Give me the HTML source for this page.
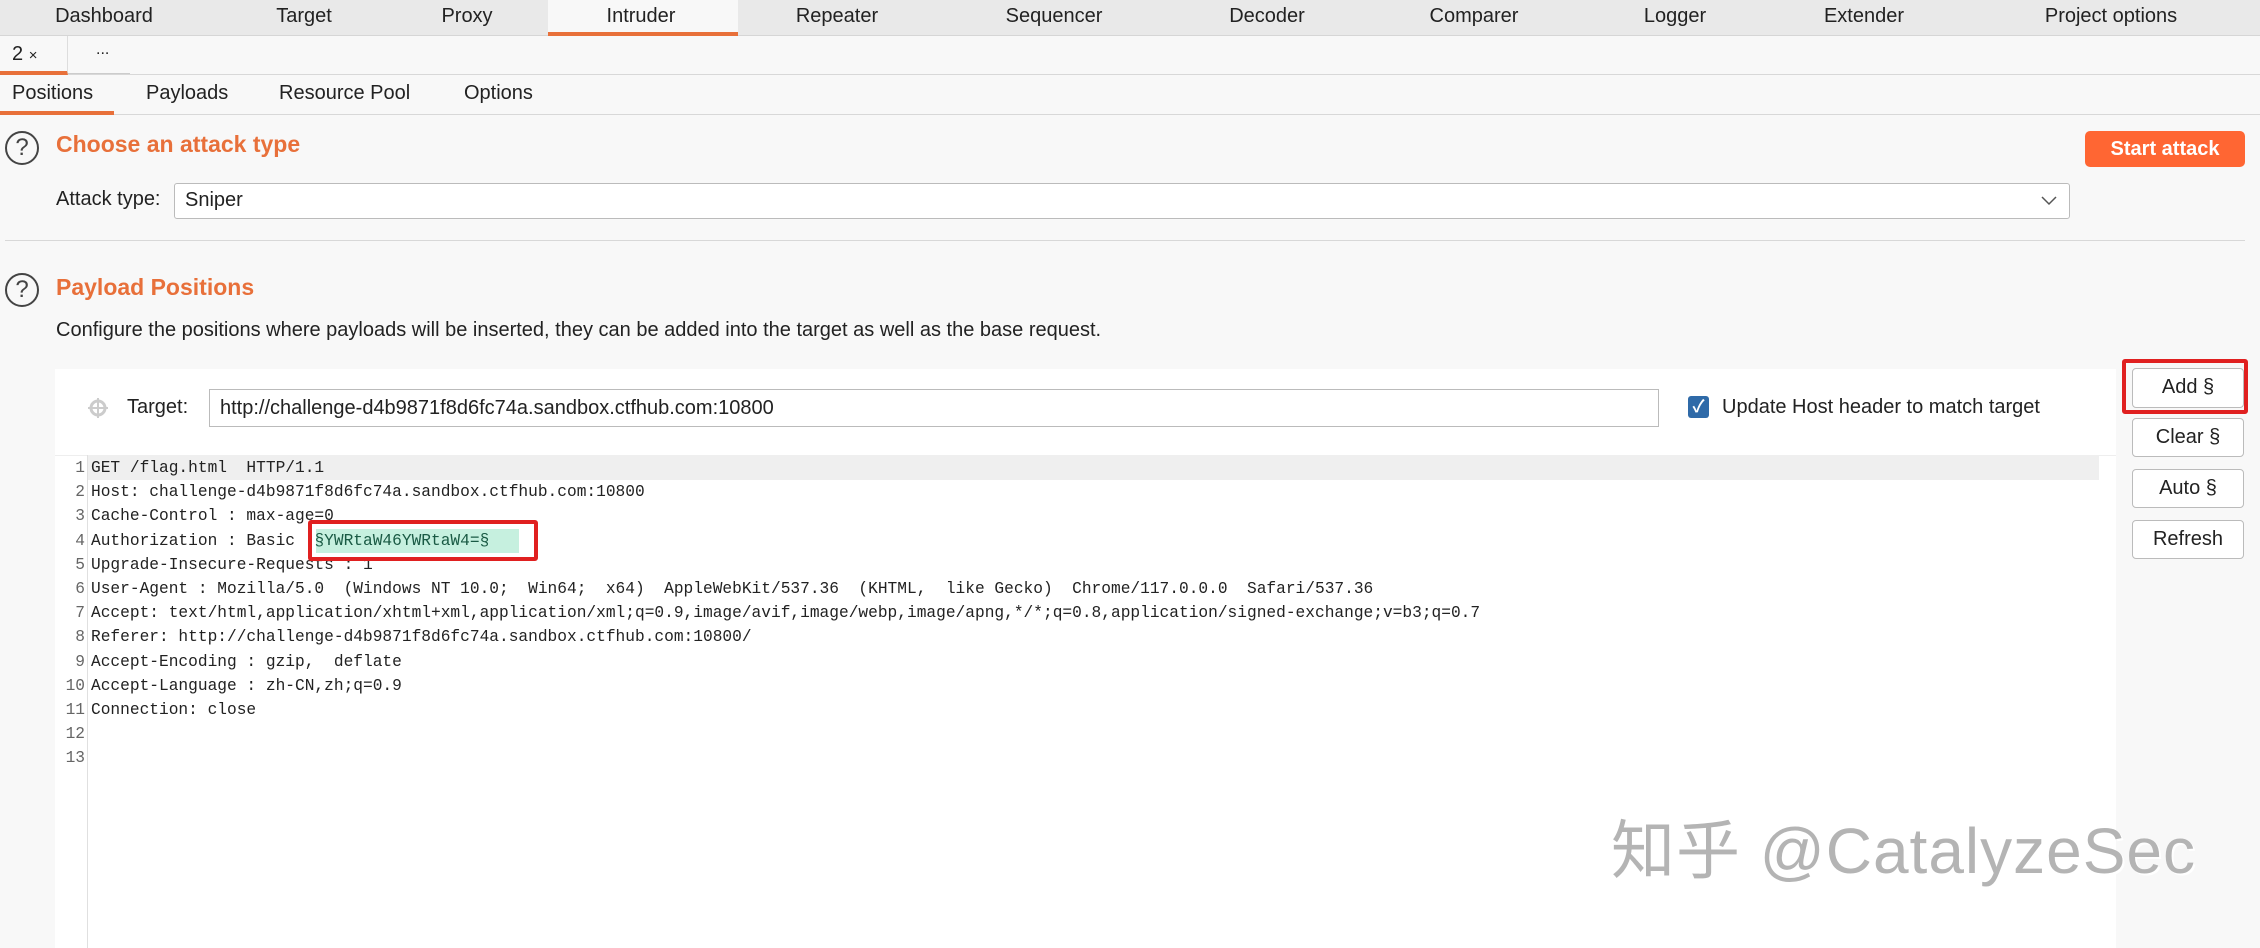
<!DOCTYPE html>
<html><head><meta charset="utf-8"><style>
*{box-sizing:border-box;margin:0;padding:0}
body{width:2260px;height:948px;overflow:hidden;background:#f8f8f8;font-family:"Liberation Sans","Noto Sans CJK SC",sans-serif;color:#222;position:relative;font-size:20px}
.abs{position:absolute}
.top{left:0;top:0;width:2260px;height:36px;background:#e9e9e9;border-bottom:1px solid #d6d6d6}
.top span{position:absolute;top:5px;font-size:20px;transform:translateX(-50%)}
.act{left:548px;top:0;width:190px;height:36px;background:#f8f8f8;border-bottom:4px solid #e8703a}
.row2{left:0;top:36px;width:2260px;height:39px;border-bottom:1px solid #d8d8d8}
.row3{left:0;top:75px;width:2260px;height:40px;border-bottom:1px solid #d8d8d8}
.q{width:34px;height:34px;border:2px solid #444;border-radius:50%;font-size:24px;text-align:center;line-height:30px;color:#444}
h2{position:absolute;color:#e8703a;font-size:23px;font-weight:bold}
.btn{position:absolute;left:2132px;width:112px;height:39px;border:1px solid #bbb;border-radius:4px;background:#fff;text-align:center;line-height:37px;font-size:20px}
pre{font-family:"Liberation Mono","Noto Sans CJK SC",monospace;font-size:16.2px;line-height:24.2px;color:#222}
</style></head><body>
<div class="abs top">
<div class="abs act"></div>
<span style="left:104px">Dashboard</span><span style="left:304px">Target</span><span style="left:467px">Proxy</span><span style="left:641px">Intruder</span><span style="left:837px">Repeater</span><span style="left:1054px">Sequencer</span><span style="left:1267px">Decoder</span><span style="left:1474px">Comparer</span><span style="left:1675px">Logger</span><span style="left:1864px">Extender</span><span style="left:2111px">Project options</span>
</div>
<div class="abs row2">
<div class="abs" style="left:0;top:0;width:68px;height:39px;border-bottom:4px solid #e8703a;border-right:1px solid #ddd"></div>
<span class="abs" style="left:12px;top:7px;font-size:20px">2 <span style="font-size:15px">×</span></span>
<div class="abs" style="left:68px;top:0;width:62px;height:38px;border-bottom:1px solid #ccc"></div>
<span class="abs" style="left:96px;top:5px;font-size:16px">...</span>
</div>
<div class="abs row3">
<div class="abs" style="left:0;top:36px;width:114px;height:4px;background:#e8703a"></div>
<span class="abs" style="left:12px;top:7px">Positions</span>
<span class="abs" style="left:146px;top:7px">Payloads</span>
<span class="abs" style="left:279px;top:7px">Resource Pool</span>
<span class="abs" style="left:464px;top:7px">Options</span>
</div>
<div class="abs q" style="left:5px;top:131px">?</div>
<h2 style="left:56px;top:131px">Choose an attack type</h2>
<div class="abs" style="left:2085px;top:131px;width:160px;height:36px;background:#ff6633;border-radius:5px;color:#fff;font-weight:bold;text-align:center;line-height:36px;font-size:20px">Start attack</div>
<span class="abs" style="left:56px;top:188px">Attack type:</span>
<div class="abs" style="left:174px;top:183px;width:1896px;height:36px;border:1px solid #bbb;border-radius:3px;background:#fff;padding:5px 10px">Sniper
<svg class="abs" style="right:12px;top:12px" width="16" height="10"><path d="M1 1L8 8L15 1" stroke="#555" stroke-width="1.5" fill="none"/></svg></div>
<div class="abs" style="left:5px;top:240px;width:2240px;height:1px;background:#d8d8d8"></div>
<div class="abs q" style="left:5px;top:273px">?</div>
<h2 style="left:56px;top:274px">Payload Positions</h2>
<span class="abs" style="left:56px;top:319px">Configure the positions where payloads will be inserted, they can be added into the target as well as the base request.</span>
<div class="abs" style="left:55px;top:369px;width:2061px;height:579px;background:#fff"></div>
<svg class="abs" style="left:87px;top:397px" width="22" height="22"><circle cx="11" cy="11" r="7" stroke="#ccc" stroke-width="3" fill="none"/><path d="M11 1V21M1 11H21" stroke="#ccc" stroke-width="2"/></svg>
<span class="abs" style="left:127px;top:396px">Target:</span>
<div class="abs" style="left:209px;top:389px;width:1450px;height:38px;border:1px solid #bbb;background:#fff;padding:7px 10px">http://challenge-d4b9871f8d6fc74a.sandbox.ctfhub.com:10800</div>
<div class="abs" style="left:1688px;top:396px;width:21px;height:22px;background:#2f6aa8;border-radius:3px;color:#fff;font-size:17px;text-align:center;line-height:22px;font-weight:bold">✓</div>
<span class="abs" style="left:1722px;top:396px">Update Host header to match target</span>
<div class="abs" style="left:55px;top:455px;width:2061px;height:1px;background:#eee"></div>
<div class="abs" style="left:87px;top:455px;width:2012px;height:25px;background:#efefef"></div>
<div class="abs" style="left:87px;top:455px;width:1px;height:493px;background:#e0e0e0"></div>
<div class="abs" style="left:316px;top:529px;width:203px;height:24px;background:#c6f0df"></div>
<pre class="abs" style="left:55px;top:456px;width:30px;text-align:right;color:#666">1
2
3
4
5
6
7
8
9
10
11
12
13</pre>
<pre class="abs" style="left:91px;top:456px">GET /flag.html  HTTP/1.1
Host: challenge-d4b9871f8d6fc74a.sandbox.ctfhub.com:10800
Cache-Control : max-age=0
Authorization : Basic  <span style="color:#1a5a44">§YWRtaW46YWRtaW4=§</span>
Upgrade-Insecure-Requests : 1
User-Agent : Mozilla/5.0  (Windows NT 10.0;  Win64;  x64)  AppleWebKit/537.36  (KHTML,  like Gecko)  Chrome/117.0.0.0  Safari/537.36
Accept: text/html,application/xhtml+xml,application/xml;q=0.9,image/avif,image/webp,image/apng,*/*;q=0.8,application/signed-exchange;v=b3;q=0.7
Referer: http://challenge-d4b9871f8d6fc74a.sandbox.ctfhub.com:10800/
Accept-Encoding : gzip,  deflate
Accept-Language : zh-CN,zh;q=0.9
Connection: close</pre>
<div class="abs" style="left:308px;top:520px;width:230px;height:41px;border:4px solid #e02020;border-radius:3px"></div>
<div class="btn" style="top:368px;height:40px">Add §</div>
<div class="abs" style="left:2122px;top:359px;width:126px;height:55px;border:4px solid #e02020;border-radius:3px"></div>
<div class="btn" style="top:418px">Clear §</div>
<div class="btn" style="top:469px">Auto §</div>
<div class="btn" style="top:520px">Refresh</div>
<div class="abs" style="left:1611px;top:800px;font-size:64px;color:#b4b4b4;text-shadow:2px 2px 0 #fff;white-space:nowrap;letter-spacing:1px">知乎 @CatalyzeSec</div>
</body></html>
